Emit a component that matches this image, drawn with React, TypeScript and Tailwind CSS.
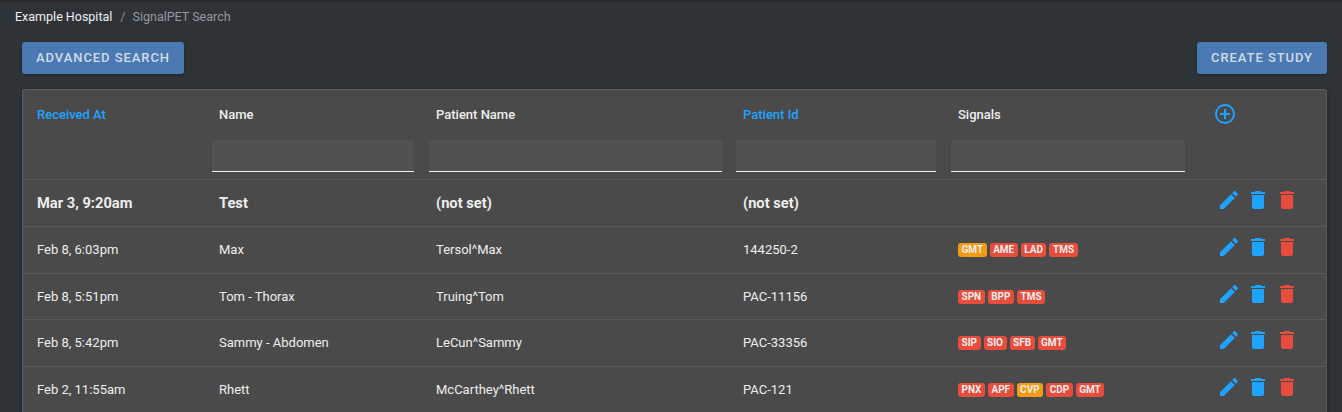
import React from 'react';

const PENCIL = 'M20.71,7.04C21.1,6.65 21.1,6 20.71,5.63L18.37,3.29C18,2.9 17.35,2.9 16.96,3.29L15.12,5.12L18.87,8.87M3,17.25V21H6.75L17.81,9.93L14.06,6.18L3,17.25Z';
const TRASH = 'M19,4H15.5L14.5,3H9.5L8.5,4H5V6H19M6,19A2,2 0 0,0 8,21H16A2,2 0 0,0 18,19V7H6V19Z';
const PLUS = 'M12,20C7.59,20 4,16.41 4,12C4,7.59 7.59,4 12,4C16.41,4 20,7.59 20,12C20,16.41 16.41,20 12,20M12,2A10,10 0 0,0 2,12A10,10 0 0,0 12,22A10,10 0 0,0 22,12A10,10 0 0,0 12,2M13,7H11V11H7V13H11V17H13V13H17V11H13V7Z';

const COLS = 'grid grid-cols-[182px_217px_307px_215px_248px_1fr]';

interface Row {
  at: string;
  name: string;
  patient: string;
  id: string;
  signals: [string, boolean?][];
  h: string;
  bold?: boolean;
}

const rows: Row[] = [
  { at: 'Mar 3, 9:20am', name: 'Test', patient: '(not set)', id: '(not set)', signals: [], h: 'h-[47px]', bold: true },
  { at: 'Feb 8, 6:03pm', name: 'Max', patient: 'Tersol^Max', id: '144250-2', signals: [['GMT', true], ['AME'], ['LAD'], ['TMS']], h: 'h-[47px]' },
  { at: 'Feb 8, 5:51pm', name: 'Tom - Thorax', patient: 'Truing^Tom', id: 'PAC-11156', signals: [['SPN'], ['BPP'], ['TMS']], h: 'h-[46px]' },
  { at: 'Feb 8, 5:42pm', name: 'Sammy - Abdomen', patient: 'LeCun^Sammy', id: 'PAC-33356', signals: [['SIP'], ['SIO'], ['SFB'], ['GMT']], h: 'h-[47px]' },
  { at: 'Feb 2, 11:55am', name: 'Rhett', patient: 'McCarthey^Rhett', id: 'PAC-121', signals: [['PNX'], ['APF'], ['CVP', true], ['CDP'], ['GMT']], h: 'h-[47px]' },
];

const Icon = ({ d, className }: { d: string; className: string }) => (
  <svg viewBox="0 0 24 24" className={`w-6 h-6 fill-current shrink-0 ${className}`}>
    <path d={d} />
  </svg>
);

const Filter = ({ className = 'mr-[7px]' }: { className?: string }) => (
  <div className={`ml-[7px] h-[32px] bg-[#515151] border-b border-[#f2f2f2] ${className}`} />
);

const Badge = ({ label, warn }: { label: string; warn?: boolean }) => (
  <span className={`h-[14px] px-[3.5px] rounded-[3px] text-[10px] leading-[14px] font-bold text-[#ececec] ${warn ? 'bg-[#f39c12]' : 'bg-[#e74c3c]'}`}>
    {label}
  </span>
);

const Button = ({ children }: { children: React.ReactNode }) => (
  <button className="h-[32px] px-[14px] rounded-[3px] bg-[#4a79b3] text-[#d3dbe5] text-[13px] font-medium tracking-[0.93px] shadow-[0_1px_3px_rgba(0,0,0,0.3)]">
    {children}
  </button>
);

export default function App() {
  return (
    <div className="w-[1342px] h-[412px] overflow-hidden bg-[#2e3338] text-[#eeeeee] text-[13px] font-['Roboto',sans-serif]">
      <div className="h-[3px] bg-gradient-to-b from-[#232629] to-[#2e3338]" />
      <div className="flex items-center h-[29px] pl-[15px] pb-[1px] text-[12.5px]">
        <span className="text-[#f0f0f0]">Example Hospital</span>
        <span className="ml-[8px] text-[#8a8d90]">/</span>
        <span className="ml-[7px] text-[#96999c]">SignalPET Search</span>
      </div>
      <div className="px-[15px] pl-[22px]">
        <div className="flex justify-between mt-[10px]">
          <Button>ADVANCED SEARCH</Button>
          <Button>CREATE STUDY</Button>
        </div>
        <div className="mt-[15px] w-[1305px] rounded-[3px] bg-[#4a4a4a] border border-[#5c5c5c] border-b-0 shadow-[0_2px_4px_rgba(0,0,0,0.4)]">
          <div className="h-[90px] border-b border-[#5a5a5a]">
            <div className={`${COLS} h-[50px] items-center font-medium pb-[1px]`}>
              <span className="pl-[14px] text-[#1ea3ff]">Received At</span>
              <span className="pl-[14px]">Name</span>
              <span className="pl-[14px]">Patient Name</span>
              <span className="pl-[14px] text-[#1ea3ff]">Patient Id</span>
              <span className="pl-[14px]">Signals</span>
              <span className="pl-[21px] pb-[2px]"><Icon d={PLUS} className="text-[#1ea3ff]" /></span>
            </div>
            <div className={COLS}>
              <div />
              <Filter className="mr-[8px]" />
              <Filter />
              <Filter className="mr-[8px]" />
              <Filter />
              <div />
            </div>
          </div>
          {rows.map((r) => (
            <div key={r.at} className={`${COLS} ${r.h} items-center border-b border-[#5a5a5a] ${r.bold ? 'font-bold text-[14.7px]' : ''}`}>
              <span className="pl-[14px]">{r.at}</span>
              <span className="pl-[14px]">{r.name}</span>
              <span className="pl-[14px]">{r.patient}</span>
              <span className="pl-[14px]">{r.id}</span>
              <div className="pl-[14px] flex gap-[3px]">
                {r.signals.map(([label, warn]) => (
                  <Badge key={label} label={label} warn={warn} />
                ))}
              </div>
              <div className="pl-[25px] pb-[6px] flex gap-[5px]">
                <Icon d={PENCIL} className="text-[#1ea3ff]" />
                <Icon d={TRASH} className="text-[#1ea3ff]" />
                <Icon d={TRASH} className="text-[#e74c3c]" />
              </div>
            </div>
          ))}
        </div>
      </div>
    </div>
  );
}
